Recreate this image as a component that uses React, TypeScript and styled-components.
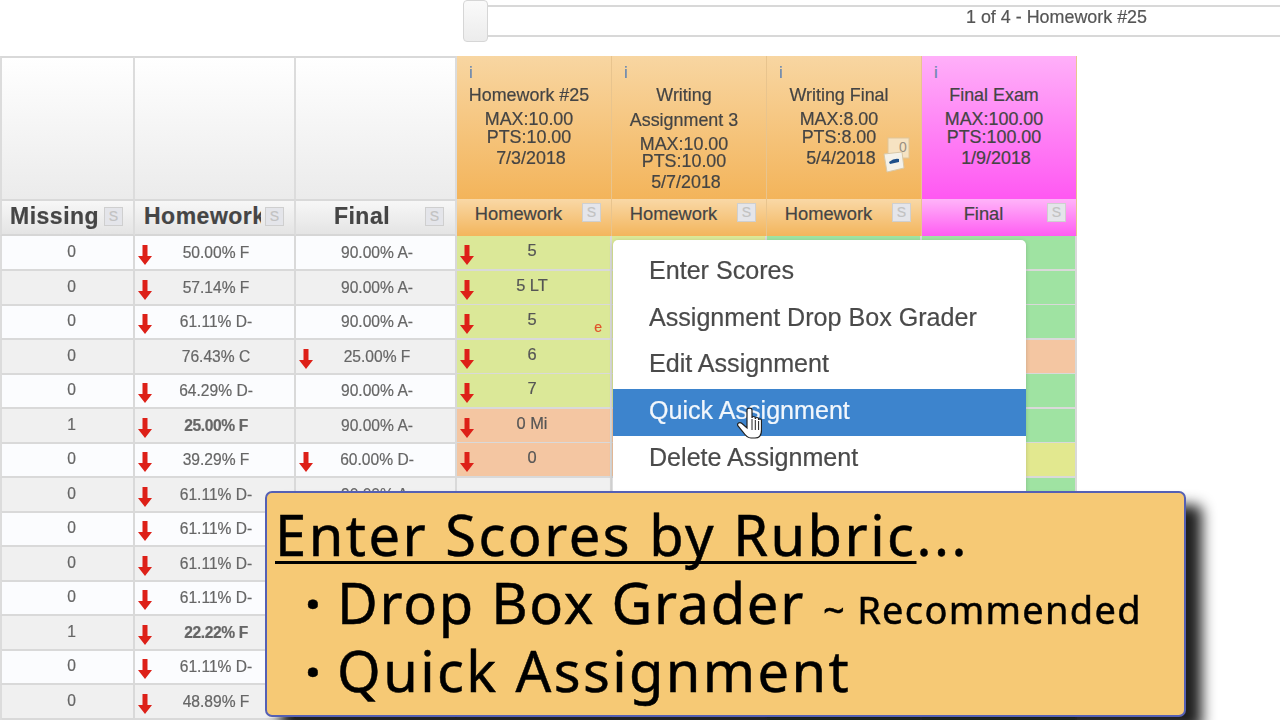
import styled, { createGlobalStyle } from "styled-components";

const GlobalStyle = createGlobalStyle`
  html, body {
    margin: 0;
    padding: 0;
    background: #fff;
    overflow: hidden;
  }
`;

const COLS = "135px 161px 161px 155px 155px 155px 155px";

type Tone = "plain" | "lime" | "salmon" | "green" | "yellow";

const toneColor: Record<Tone, string> = {
  plain: "transparent",
  lime: "#dbe898",
  salmon: "#f4c6a2",
  green: "#9fe3a2",
  yellow: "#e2e88f",
};

interface RowData {
  missing?: string;
  hw?: string;
  hwArrow?: boolean;
  hwBold?: boolean;
  final?: string;
  finalArrow?: boolean;
  score?: string;
  tone: Tone;
  lastTone: Tone;
  late?: boolean;
}

const rows: RowData[] = [
  { missing: "0", hw: "50.00% F", hwArrow: true, final: "90.00% A-", score: "5", tone: "lime", lastTone: "green" },
  { missing: "0", hw: "57.14% F", hwArrow: true, final: "90.00% A-", score: "5 LT", tone: "lime", lastTone: "green" },
  { missing: "0", hw: "61.11% D-", hwArrow: true, final: "90.00% A-", score: "5", tone: "lime", lastTone: "green", late: true },
  { missing: "0", hw: "76.43% C", final: "25.00% F", finalArrow: true, score: "6", tone: "lime", lastTone: "salmon" },
  { missing: "0", hw: "64.29% D-", hwArrow: true, final: "90.00% A-", score: "7", tone: "lime", lastTone: "green" },
  { missing: "1", hw: "25.00% F", hwArrow: true, hwBold: true, final: "90.00% A-", score: "0 Mi", tone: "salmon", lastTone: "green" },
  { missing: "0", hw: "39.29% F", hwArrow: true, final: "60.00% D-", finalArrow: true, score: "0", tone: "salmon", lastTone: "yellow" },
  { missing: "0", hw: "61.11% D-", hwArrow: true, final: "90.00% A-", tone: "plain", lastTone: "green" },
  { missing: "0", hw: "61.11% D-", hwArrow: true, tone: "plain", lastTone: "green" },
  { missing: "0", hw: "61.11% D-", hwArrow: true, tone: "plain", lastTone: "green" },
  { missing: "0", hw: "61.11% D-", hwArrow: true, tone: "plain", lastTone: "green" },
  { missing: "1", hw: "22.22% F", hwArrow: true, hwBold: true, tone: "plain", lastTone: "green" },
  { missing: "0", hw: "61.11% D-", hwArrow: true, tone: "plain", lastTone: "green" },
  { missing: "0", hw: "48.89% F", hwArrow: true, tone: "plain", lastTone: "green" },
  { tone: "plain", lastTone: "green" },
];

const assignments = [
  { title: "Homework #25", max: "10.00", pts: "10.00", date: "7/3/2018", category: "Homework", pink: false },
  { title: "Writing Assignment 3", max: "10.00", pts: "10.00", date: "5/7/2018", category: "Homework", pink: false },
  { title: "Writing Final", max: "8.00", pts: "8.00", date: "5/4/2018", category: "Homework", pink: false, attach: true },
  { title: "Final Exam", max: "100.00", pts: "100.00", date: "1/9/2018", category: "Final", pink: true },
];

const menuItems = ["Enter Scores", "Assignment Drop Box Grader", "Edit Assignment", "Quick Assignment", "Delete Assignment"];

const Page = styled.div`
  position: relative;
  width: 1280px;
  height: 720px;
  overflow: hidden;
  background: #fff;
  font-family: "Liberation Sans", Arial, sans-serif;
`;

const Blurred = styled.div`
  filter: blur(0.4px);
  -webkit-text-stroke: 0.2px;
`;

const SliderBar = styled.div`
  position: relative;
  height: 56px;
  padding: 5px 0 0 487px;
  box-sizing: border-box;
`;

const SliderTrack = styled.div`
  height: 32px;
  box-sizing: border-box;
  border-top: 2px solid #d8d8d8;
  border-bottom: 2px solid #d8d8d8;
  padding-left: 479px;
  font-size: 17.9px;
  line-height: 20px;
  color: #555;
`;

const SliderHandle = styled.div`
  position: absolute;
  left: 463px;
  top: 0;
  width: 25px;
  height: 42px;
  box-sizing: border-box;
  background: linear-gradient(#fafafa, #ececec);
  border: 1px solid #d6d6d6;
  border-radius: 4px;
`;

const GridRow = styled.div<{ $height: number }>`
  display: grid;
  grid-template-columns: ${COLS};
  width: 1077px;
  height: ${({ $height }) => $height}px;
`;

const BlankHead = styled.div`
  box-sizing: border-box;
  background: linear-gradient(#ffffff 0%, #f8f8f8 35%, #ebebeb 100%);
  border-top: 2px solid #d9d9d9;
  border-right: 2px solid #dcdcdc;
  &:first-child {
    border-left: 2px solid #dcdcdc;
  }
`;

const AssignHead = styled.div<{ $pink: boolean }>`
  position: relative;
  box-sizing: border-box;
  display: flex;
  flex-direction: column;
  align-items: center;
  padding: 0 10px 0 0;
  background: ${({ $pink }) =>
    $pink ? "linear-gradient(#ffb0f9, #ff58f2)" : "linear-gradient(#f8d6a2, #f3b45a)"};
  border-right: 1px solid #e8c48e;
  color: #444;
  font-size: 17.9px;
  text-align: center;
`;

const InfoMark = styled.div`
  align-self: flex-start;
  height: 27px;
  padding: 7px 0 0 12px;
  box-sizing: border-box;
  font-size: 17px;
  line-height: 20px;
  color: #6a88b0;
`;

const AssignTitle = styled.div`
  width: 140px;
  line-height: 24.5px;
`;

const AssignStats = styled.div`
  margin-top: 3.5px;
  line-height: 17.5px;
`;

const AssignDate = styled.div`
  margin-top: 1.5px;
  padding-left: 4px;
  line-height: 21px;
`;

const AttachBadge = styled.svg`
  position: absolute;
  left: 116px;
  top: 81px;
`;

const SubHead = styled.div<{ $align: "start" | "center"; $inset: number }>`
  position: relative;
  box-sizing: border-box;
  display: flex;
  align-items: center;
  justify-content: ${({ $align }) => ($align === "start" ? "flex-start" : "center")};
  padding-left: ${({ $align, $inset }) => ($align === "start" ? $inset : 0)}px;
  padding-right: ${({ $align, $inset }) => ($align === "center" ? $inset : 0)}px;
  padding-bottom: 3px;
  background: linear-gradient(#f7f7f7, #e4e4e4);
  border-top: 2px solid #d9d9d9;
  border-right: 2px solid #dcdcdc;
  border-bottom: 2px solid #d6d6d6;
  &:first-child {
    border-left: 2px solid #dcdcdc;
  }
`;

const SubLabel = styled.div`
  max-width: 117px;
  overflow: hidden;
  white-space: nowrap;
  font-size: 23px;
  font-weight: bold;
  letter-spacing: 0.5px;
  color: #454545;
`;

const AssignSub = styled.div<{ $pink: boolean }>`
  position: relative;
  box-sizing: border-box;
  padding: 5px 31px 0 0;
  text-align: center;
  font-size: 18.3px;
  line-height: 20px;
  color: #444;
  background: ${({ $pink }) =>
    $pink ? "linear-gradient(#ffb4f9, #ff5cf2)" : "linear-gradient(#f9d8a6, #f3b55c)"};
  border-right: 1px solid #e8c48e;
`;

const SortBadge = styled.div<{ $right: number; $top: number }>`
  position: absolute;
  right: ${({ $right }) => $right}px;
  top: ${({ $top }) => $top}px;
  width: 19px;
  height: 19px;
  box-sizing: border-box;
  border: 1px solid #cfcfcf;
  background: #e4e5ea;
  font-size: 14px;
  line-height: 17px;
  text-align: center;
  color: #c2c2c2;
`;

const BodyRow = styled(GridRow)<{ $odd: boolean }>`
  background: ${({ $odd }) => ($odd ? "#f0f0f0" : "#fbfcfe")};
`;

const Cell = styled.div<{ $tone?: Tone }>`
  position: relative;
  box-sizing: border-box;
  display: flex;
  align-items: flex-start;
  background: ${({ $tone }) => toneColor[$tone ?? "plain"]};
  border-right: 2px solid #d9d9d9;
  border-bottom: 2px solid #d9d9d9;
  font-size: 15.6px;
  color: #666;
  &:first-child {
    border-left: 2px solid #dcdcdc;
  }
`;

const ArrowSlot = styled.div`
  flex: none;
  width: 18px;
  height: 100%;
  padding: 9px 0 0 2.5px;
  box-sizing: border-box;
`;

const CellText = styled.div<{ $bold?: boolean; $pad: number; $left?: number; $top: number }>`
  flex: 1;
  padding-top: ${({ $top }) => $top}px;
  padding-right: ${({ $pad }) => $pad}px;
  padding-left: ${({ $left }) => $left ?? 0}px;
  line-height: 18px;
  text-align: center;
  white-space: nowrap;
  font-weight: ${({ $bold }) => ($bold ? "bold" : "normal")};
  letter-spacing: ${({ $bold }) => ($bold ? "-0.4px" : "0")};
`;

const ScoreText = styled(CellText)`
  font-size: 16.4px;
  color: #555;
`;

const LateMark = styled.span`
  position: absolute;
  right: 8px;
  top: 14px;
  font-size: 14px;
  line-height: 16px;
  color: #e0522a;
`;

const ContextMenu = styled.div`
  position: absolute;
  left: 613px;
  top: 240px;
  width: 413px;
  height: 270px;
  box-sizing: border-box;
  padding-top: 9px;
  background: #fff;
  border-radius: 5px;
  box-shadow: 0 1px 4px rgba(0, 0, 0, 0.18);
`;

const MenuItem = styled.div<{ $active?: boolean }>`
  position: relative;
  height: 46.7px;
  padding-left: 36px;
  font-size: 25.1px;
  line-height: 43px;
  white-space: nowrap;
  color: ${({ $active }) => ($active ? "#f2f7fc" : "#4a4a4a")};
  background: ${({ $active }) => ($active ? "#3d84cd" : "transparent")};
`;

const HandCursor = styled.svg`
  position: absolute;
  left: 124px;
  top: 18px;
`;

const Caption = styled.div`
  position: absolute;
  left: 265px;
  top: 491px;
  width: 921px;
  height: 226px;
  box-sizing: border-box;
  padding: 7px 0 0 8px;
  background: #f6c975;
  border: 2px solid #5560b4;
  border-radius: 7px;
  box-shadow: 16px 14px 14px rgba(0, 0, 0, 0.88);
  font-family: "Noto Sans", Lato, sans-serif;
  -webkit-text-stroke: 0.5px #000;
  color: #000;
`;

const CaptionLine = styled.div<{ $indent?: number; $tracking: number }>`
  display: flex;
  align-items: baseline;
  height: 68px;
  padding-left: ${({ $indent }) => $indent ?? 0}px;
  font-size: 56px;
  line-height: 68px;
  letter-spacing: ${({ $tracking }) => $tracking}px;
  white-space: nowrap;
`;

const Underlined = styled.span`
  text-decoration: underline;
  text-decoration-thickness: 3px;
  text-underline-offset: 5px;
  text-decoration-skip-ink: none;
`;

const Bullet = styled.span`
  width: 32px;
  margin-left: -6px;
  font-weight: bold;
`;

const Aside = styled.span`
  margin-left: 18px;
  font-size: 38px;
  letter-spacing: 1.3px;
`;

const DownArrow = () => (
  <svg width="14" height="20" viewBox="0 0 14 20">
    <path d="M4.5 0 H9.5 V11 H14 L7 20 L0 11 H4.5 Z" fill="#dd2018" />
  </svg>
);

export default function App() {
  return (
    <Page>
      <GlobalStyle />
      <Blurred>
        <SliderBar>
          <SliderTrack>1 of 4 - Homework #25</SliderTrack>
          <SliderHandle />
        </SliderBar>

        <GridRow $height={143}>
          <BlankHead />
          <BlankHead />
          <BlankHead />
          {assignments.map((a) => (
            <AssignHead key={a.title} $pink={a.pink}>
              <InfoMark>i</InfoMark>
              <AssignTitle>{a.title}</AssignTitle>
              <AssignStats>
                MAX:{a.max}
                <br />
                PTS:{a.pts}
              </AssignStats>
              <AssignDate>{a.date}</AssignDate>
              {a.attach && (
                <AttachBadge width="28" height="36" viewBox="0 0 28 36">
                  <rect x="5" y="1" width="21" height="20" fill="#f6e3c2" stroke="#e0c69a" />
                  <text x="20" y="15" fontSize="14" textAnchor="middle" fill="#9a9080" fontFamily="Liberation Sans">
                    0
                  </text>
                  <path d="M1 17 L19 15 L21 31 L4 35 Z" fill="#f4f2ea" stroke="#d8c8a8" />
                  <path d="M6 25 Q11 21 16 22 L16 25 L7 27 Z" fill="#1d4f8a" />
                </AttachBadge>
              )}
            </AssignHead>
          ))}
        </GridRow>

        <GridRow $height={37}>
          <SubHead $align="start" $inset={8}>
            <SubLabel>Missing</SubLabel>
            <SortBadge $right={10} $top={6}>S</SortBadge>
          </SubHead>
          <SubHead $align="start" $inset={9}>
            <SubLabel>Homework</SubLabel>
            <SortBadge $right={10} $top={6}>S</SortBadge>
          </SubHead>
          <SubHead $align="center" $inset={27}>
            <SubLabel>Final</SubLabel>
            <SortBadge $right={11} $top={6}>S</SortBadge>
          </SubHead>
          {assignments.map((a) => (
            <AssignSub key={a.title} $pink={a.pink}>
              {a.category}
              <SortBadge $right={10} $top={4}>S</SortBadge>
            </AssignSub>
          ))}
        </GridRow>

        {rows.map((r, i) => (
          <BodyRow key={i} $height={34.5} $odd={i % 2 === 1}>
            <Cell>
              <CellText $pad={0} $left={8} $top={7}>{r.missing}</CellText>
            </Cell>
            <Cell>
              <ArrowSlot>{r.hwArrow && <DownArrow />}</ArrowSlot>
              <CellText $pad={15} $top={8} $bold={r.hwBold}>{r.hw}</CellText>
            </Cell>
            <Cell>
              <ArrowSlot>{r.finalArrow && <DownArrow />}</ArrowSlot>
              <CellText $pad={15} $top={8}>{r.final}</CellText>
            </Cell>
            <Cell $tone={r.tone}>
              <ArrowSlot>{r.score && <DownArrow />}</ArrowSlot>
              <ScoreText $pad={21} $top={5}>{r.score}</ScoreText>
              {r.late && <LateMark>e</LateMark>}
            </Cell>
            <Cell $tone={r.tone} />
            <Cell $tone={r.lastTone} />
            <Cell $tone={r.lastTone} />
          </BodyRow>
        ))}

        <ContextMenu>
          {menuItems.map((label) => (
            <MenuItem key={label} $active={label === "Quick Assignment"}>
              {label}
              {label === "Quick Assignment" && (
                <HandCursor width="25" height="32" viewBox="0 0 25 32">
                  <path
                    d="M10 3 C10 0.5 15 0.5 15 3 V11 C15 9 18.3 9 18.3 11 V12 C18.3 10 21.6 10 21.6 12 V13 C21.6 11.5 24.5 11.5 24.5 13.5 V23 C24.5 28 22 31 18 31 H14 C10 31 8 28 6 25 L1 19 C-0.5 16.5 2.5 14.5 5 16.5 L10 21 Z"
                    fill="#fff"
                    stroke="#222"
                    strokeWidth="1.2"
                  />
                  <path d="M15 12 V23 M18.3 13 V23 M21.6 14 V23" stroke="#222" strokeWidth="1" fill="none" />
                </HandCursor>
              )}
            </MenuItem>
          ))}
        </ContextMenu>
      </Blurred>

      <Caption>
        <CaptionLine $tracking={2.5}>
          <span>
            <Underlined>Enter Scores by Rubric</Underlined>...
          </span>
        </CaptionLine>
        <CaptionLine $indent={36} $tracking={1.7}>
          <Bullet>·</Bullet>
          <span>Drop Box Grader</span>
          <Aside>~ Recommended</Aside>
        </CaptionLine>
        <CaptionLine $indent={36} $tracking={2.4}>
          <Bullet>·</Bullet>
          <span>Quick Assignment</span>
        </CaptionLine>
      </Caption>
    </Page>
  );
}
